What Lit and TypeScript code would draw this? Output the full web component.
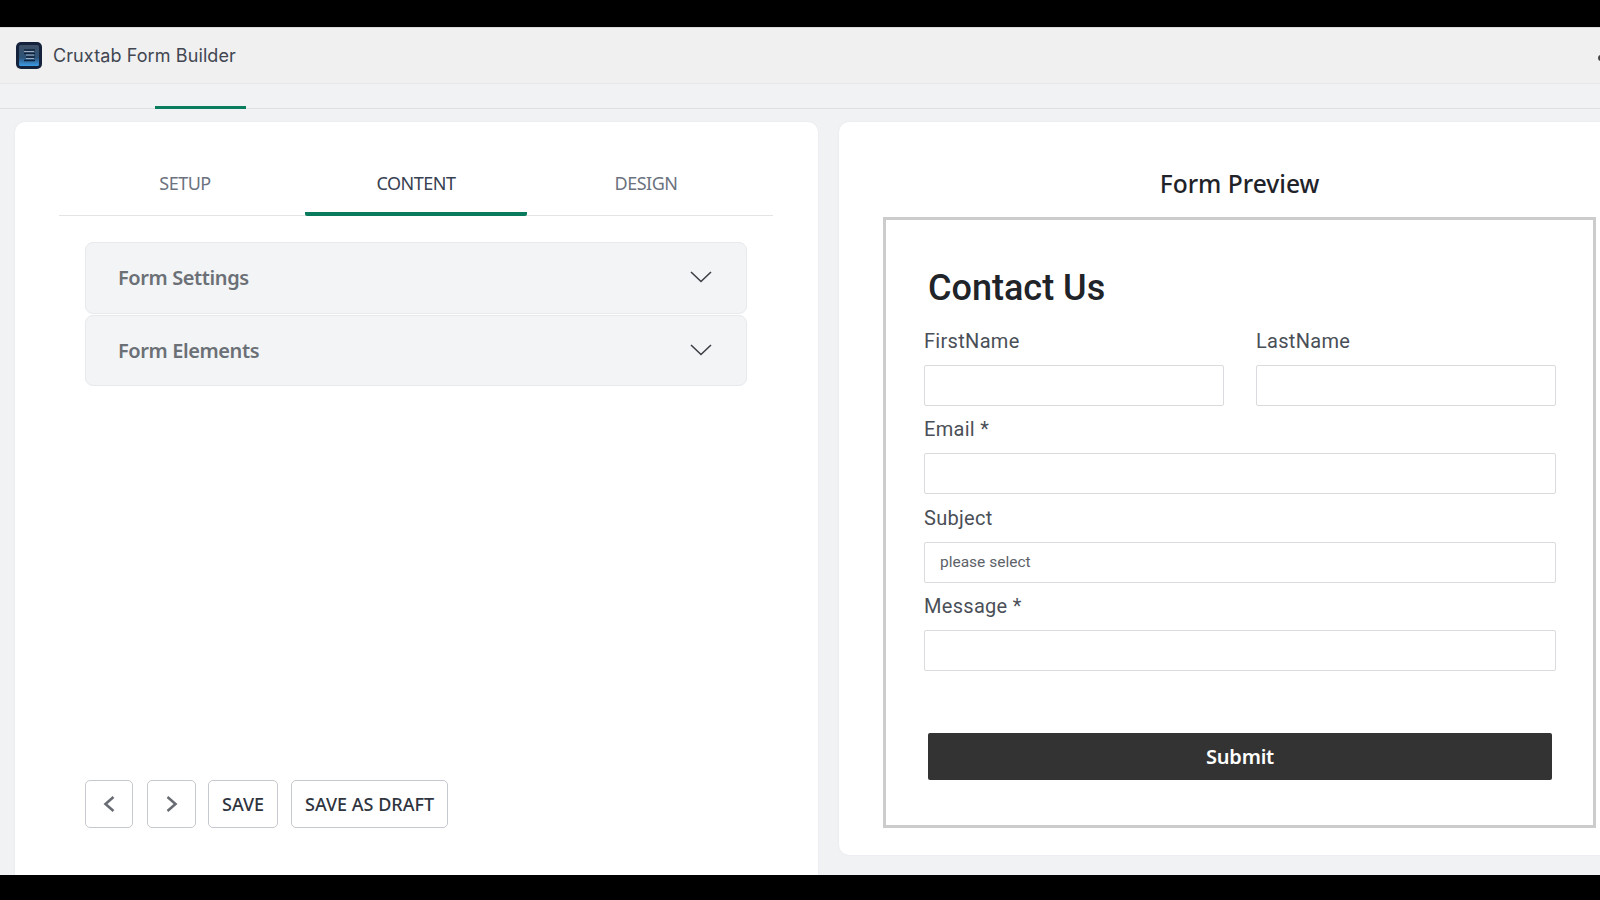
import { LitElement, html, css, svg } from "lit";
import { customElement, state } from "lit/decorators.js";

const chevronDown = svg`<path d="M2 2 L12 11.5 L22 2" fill="none" stroke="#3c3f44" stroke-width="1.6" />`;

@customElement("app-root")
export class AppRoot extends LitElement {
  @state() tab = "CONTENT";

  static styles = css`
    :host {
      display: block;
      width: 1600px;
      height: 900px;
      overflow: hidden;
      background: #000;
      font-family: "Noto Sans", sans-serif;
    }
    * {
      box-sizing: border-box;
    }
    .app {
      margin-top: 27px;
      height: 848px;
      background: #f1f2f4;
      overflow: hidden;
    }
    .topbar {
      height: 57px;
      background: #f0f0f0;
      border-bottom: 1px solid #e7e8ea;
      border-top: 1px solid #dcdcdc;
      display: flex;
      align-items: center;
      justify-content: space-between;
      padding-left: 16px;
    }
    .brand {
      display: flex;
      align-items: center;
      gap: 11px;
      font: 400 18px "Inter", sans-serif;
      letter-spacing: 0.1px;
      color: #414650;
    }
    .edge-dot {
      width: 6px;
      height: 6px;
      border-radius: 50%;
      background: #444;
      margin-right: -4px;
      margin-top: 5px;
    }
    .subbar {
      height: 25px;
      border-bottom: 1px solid #dfe0e3;
      padding-left: 155px;
      display: flex;
      align-items: flex-end;
    }
    .subbar i {
      display: block;
      width: 91px;
      height: 3px;
      margin-bottom: -1px;
      background: #0a7d5e;
    }
    .panels {
      display: flex;
      gap: 21px;
      padding: 13px 0 0 15px;
      align-items: flex-start;
    }
    .panel {
      flex: none;
      background: #fff;
      border-radius: 10px 10px 0 0;
      box-shadow: 0 0 2px #e3e4e7;
    }
    .left {
      width: 803px;
      height: 760px;
      padding: 0 45px 0 44px;
      display: flex;
      flex-direction: column;
    }
    .tabs {
      display: grid;
      grid-template-columns: 246px 222px 246px;
      height: 94px;
      border-bottom: 1px solid #e3e4e6;
      text-transform: uppercase;
    }
    .tab {
      display: flex;
      align-items: center;
      justify-content: center;
      padding-top: 31px;
      height: 94px;
      font-size: 18px;
      letter-spacing: -0.5px;
      color: #6b7280;
      border-bottom: 4px solid transparent;
      border-radius: 0 0 2px 2px;
    }
    .tab.setup {
      padding-left: 6px;
    }
    .tab.design {
      padding-right: 8px;
    }
    .tab.active {
      color: #374151;
      border-bottom-color: #0a7a5c;
    }
    .accordions {
      margin: 26px 26px 0;
      display: flex;
      flex-direction: column;
      gap: 1px;
    }
    .acc {
      height: 71.5px;
      background: #f3f4f6;
      border: 1px solid #e8e9ec;
      border-radius: 8px;
      padding: 0 33px 0 32px;
      display: flex;
      align-items: center;
      justify-content: space-between;
      font-size: 20px;
      font-weight: 600;
      letter-spacing: -0.4px;
      color: #6b7076;
    }
    .acc svg {
      width: 24px;
      height: 14px;
      margin-bottom: 1px;
    }
    .actions {
      margin: auto 26px 54px;
      display: flex;
    }
    .btn {
      height: 48px;
      border: 1.5px solid #c6c9cf;
      border-radius: 5px;
      background: #fff;
      display: flex;
      align-items: center;
      justify-content: center;
      padding: 0 13px;
      font: 500 18px "Noto Sans", sans-serif;
      color: #2f3540;
    }
    .btn.prev {
      width: 48px;
      padding: 0;
    }
    .btn.next {
      width: 49px;
      padding: 0;
      margin-left: 14px;
    }
    .btn.save {
      margin-left: 12px;
    }
    .btn.draft {
      margin-left: 13px;
    }
    .btn svg {
      width: 12px;
      height: 16px;
    }
    .right {
      width: 800px;
      height: 733px;
      border-radius: 10px;
      padding: 0 0 0 44px;
    }
    .preview-title {
      width: 713px;
      height: 95px;
      padding-top: 50px;
      text-align: center;
      font-size: 24.6px;
      font-weight: 500;
      line-height: 24px;
      color: #1f2329;
    }
    .form-box {
      width: 713px;
      height: 611px;
      border: 3px solid #cccccc;
      padding: 43px 37px 0 38px;
      font-family: "Roboto", sans-serif;
    }
    h1 {
      margin: 0 0 0 4px;
      height: 50px;
      font: 500 36px/50px "Roboto", sans-serif;
      color: #202328;
    }
    .row {
      display: grid;
      grid-template-columns: 300px 300px;
      gap: 32px;
    }
    label {
      display: block;
      height: 37px;
      font-size: 20px;
      line-height: 27px;
      letter-spacing: 0.3px;
      color: #4a4f57;
    }
    .first {
      margin-top: 15px;
    }
    .field {
      height: 41px;
      border: 1.5px solid #dadbde;
      border-radius: 2px;
      background: #fff;
      margin-bottom: 10.4px;
      display: flex;
      align-items: center;
      padding-left: 15px;
      font-size: 15.5px;
      color: #5d6269;
    }
    .stack {
      width: 632px;
    }
    .submit {
      margin: 62px 0 0 4px;
      width: 624px;
      height: 47px;
      background: #333333;
      border-radius: 2px;
      display: flex;
      align-items: center;
      justify-content: center;
      font: 600 20px "Noto Sans", sans-serif;
      letter-spacing: -0.2px;
      color: #fff;
    }
  `;

  private renderLogo() {
    return html`<svg width="26" height="27" viewBox="0 0 26 27">
      <defs>
        <linearGradient id="logo" x1="0" y1="0" x2="0" y2="1">
          <stop offset="0" stop-color="#3f5067" />
          <stop offset="0.6" stop-color="#2c5378" />
          <stop offset="1" stop-color="#3d9be6" />
        </linearGradient>
      </defs>
      <rect width="26" height="27" rx="5" fill="#14233b" />
      <rect x="3" y="3" width="20" height="21" rx="1.5" fill="url(#logo)" />
      <path d="M8 8h11M8 11.5h11M10 15h9M8 18.5h11" stroke="#10233c" stroke-width="1.7" fill="none" />
      <path d="M8 9.5h10M10 13h8M10 16.5h8" stroke="#c7d3df" stroke-width="0.7" fill="none" />
    </svg>`;
  }

  private renderTextField(name: string) {
    return html`<label>${name}</label>
      <div class="field"></div>`;
  }

  render() {
    return html`
      <div class="app">
        <div class="topbar">
          <div class="brand">${this.renderLogo()}<span>Cruxtab Form Builder</span></div>
          <div class="edge-dot"></div>
        </div>
        <div class="subbar"><i></i></div>
        <div class="panels">
          <section class="panel left">
            <div class="tabs">
              ${["SETUP", "CONTENT", "DESIGN"].map(
                (t) => html`<div class="tab ${t.toLowerCase()} ${t === this.tab ? "active" : ""}">${t}</div>`
              )}
            </div>
            <div class="accordions">
              ${["Form Settings", "Form Elements"].map(
                (t) => html`<div class="acc">
                  <span>${t}</span>
                  <svg viewBox="0 0 24 14">${chevronDown}</svg>
                </div>`
              )}
            </div>
            <div class="actions">
              <div class="btn prev">
                <svg viewBox="0 0 12 16"><path d="M10.5 1 L2.5 8 L10.5 15" fill="none" stroke="#696c72" stroke-width="2.6" /></svg>
              </div>
              <div class="btn next">
                <svg viewBox="0 0 12 16"><path d="M1.5 1 L9.5 8 L1.5 15" fill="none" stroke="#696c72" stroke-width="2.6" /></svg>
              </div>
              <div class="btn save">SAVE</div>
              <div class="btn draft">SAVE AS DRAFT</div>
            </div>
          </section>
          <section class="panel right">
            <div class="preview-title">Form Preview</div>
            <div class="form-box">
              <h1>Contact Us</h1>
              <div class="row first">
                <div>${this.renderTextField("FirstName")}</div>
                <div>${this.renderTextField("LastName")}</div>
              </div>
              <div class="stack">
                ${this.renderTextField("Email *")}
                <label>Subject</label>
                <div class="field">please select</div>
                ${this.renderTextField("Message *")}
              </div>
              <div class="submit">Submit</div>
            </div>
          </section>
        </div>
      </div>
    `;
  }
}

declare global {
  interface HTMLElementTagNameMap {
    "app-root": AppRoot;
  }
}
